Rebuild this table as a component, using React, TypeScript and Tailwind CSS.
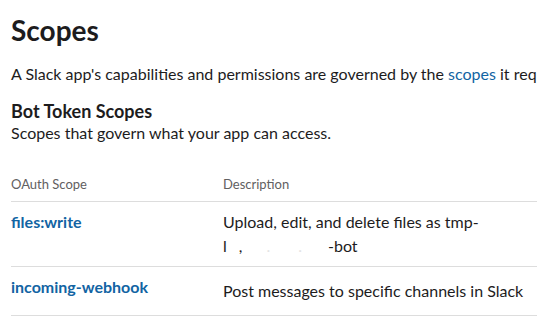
import React from "react";

export default function App() {
  return (
    <div
      className="w-[537px] h-[325px] overflow-hidden bg-white text-[#1d1c1d] pl-[11px]"
      style={{ fontFamily: "Lato, 'Noto Sans', sans-serif" }}
    >
      <h1 className="text-[28px] font-bold leading-[36px] pt-[12px]">Scopes</h1>
      <p className="text-[16px] leading-[24px] mt-[14px] whitespace-nowrap">
        A Slack app's capabilities and permissions are governed by the{" "}
        <span className="text-[#1264a3]">scopes</span> it req
      </p>
      <h2 className="text-[18px] font-bold leading-[20px] mt-[15px]">Bot Token Scopes</h2>
      <p className="text-[16px] leading-[24px]">Scopes that govern what your app can access.</p>
      <div className="mt-[29px] w-[600px]">
        <div className="flex border-b border-[#dddddd] pb-[7px] leading-[20px] text-[13px] text-[#616061]">
          <div className="w-[212px]">OAuth Scope</div>
          <div>Description</div>
        </div>
        <div className="flex border-b border-[#dddddd] pt-[8px] pb-[8px] text-[16px] leading-[24px]">
          <div className="w-[212px] font-bold text-[#1264a3]">files:write</div>
          <div className="w-[290px]">
            <div>Upload, edit, and delete files as tmp-</div>
            <div className="flex">
              <span>l</span>
              <span className="ml-[12px]">,</span>
              <span className="ml-[24px] text-[#e4e4e4]">.</span>
              <span className="ml-[28px] text-[#e4e4e4]">.</span>
              <span className="ml-[26px]">-bot</span>
            </div>
          </div>
        </div>
        <div className="flex items-start border-b border-[#dddddd] text-[16px] leading-[24px]">
          <div className="w-[212px] pt-[8px] font-bold text-[#1264a3]">incoming-webhook</div>
          <div className="pt-[12px] pb-[12px]">Post messages to specific channels in Slack</div>
        </div>
      </div>
    </div>
  );
}
